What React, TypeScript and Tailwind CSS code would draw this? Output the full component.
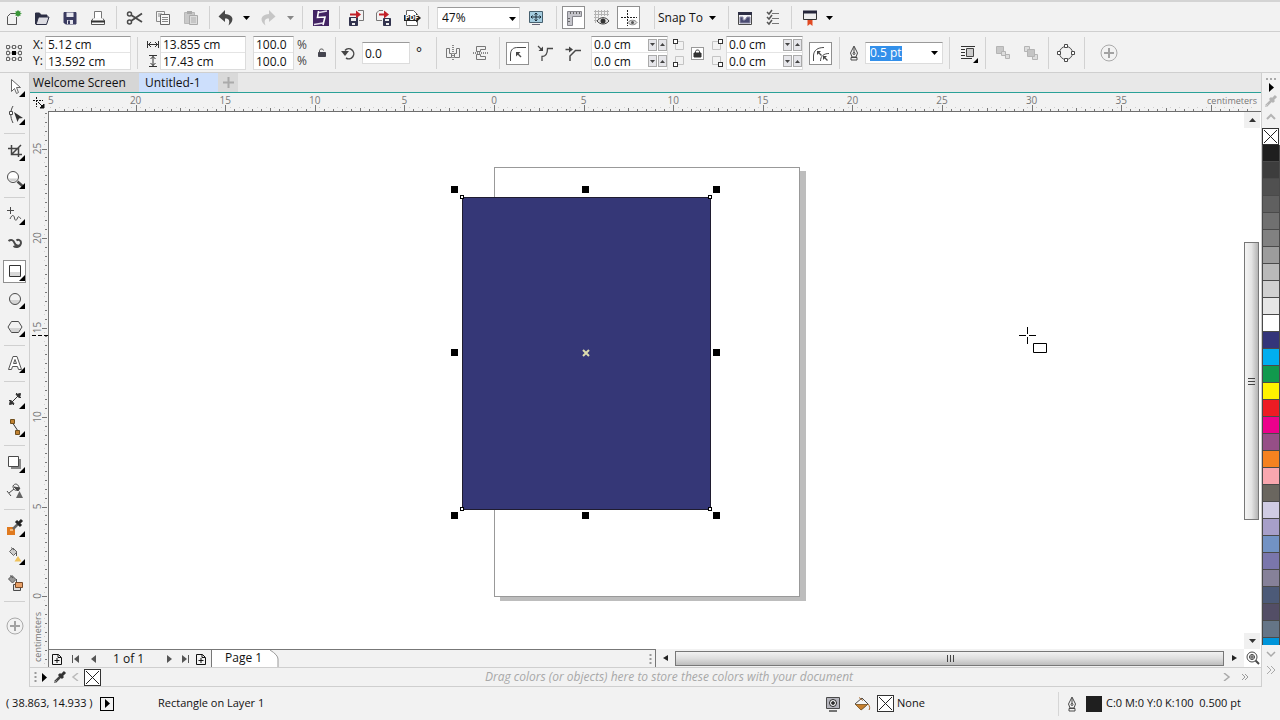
import React, { useState } from 'react';

interface IconProps {
  size?: number;
  className?: string;
  children: React.ReactNode;
}

const Icon = ({ size = 18, className = '', children }: IconProps) => (
  <svg
    width={size}
    height={size}
    viewBox={`0 0 ${size} ${size}`}
    fill="none"
    stroke="#4a4a4a"
    className={`shrink-0 ${className}`}
    aria-hidden="true"
  >
    {children}
  </svg>
);

interface ButtonProps {
  label: string;
  width?: string;
  active?: boolean;
  children: React.ReactNode;
}

const ToolButton = ({ label, width = 'w-7', active = false, children }: ButtonProps) => (
  <button
    type="button"
    aria-label={label}
    aria-pressed={active}
    className={
      active
        ? 'flex h-[23px] w-[23px] shrink-0 items-center justify-center border border-[#909090] bg-white'
        : `flex h-6 shrink-0 items-center justify-center ${width}`
    }
  >
    {children}
  </button>
);

const Sep = ({ className = 'mx-1' }: { className?: string }) => (
  <div className={`h-full w-px shrink-0 bg-[#d2d2d2] ${className}`} />
);

const Caret = ({ color = '#000' }: { color?: string }) => (
  <svg width="7" height="4" viewBox="0 0 7 4" className="shrink-0" aria-hidden="true">
    <path d="M0 0h7L3.500 4z" fill={color} />
  </svg>
);

const Triangle = ({ left = false, color = '#000', height = 8 }: { left?: boolean; color?: string; height?: number }) => (
  <svg width="5" height={height} viewBox="0 0 5 8" preserveAspectRatio="none" className="shrink-0" aria-hidden="true">
    <path d={left ? 'M5 0v8L0 4z' : 'M0 0v8l5-4z'} fill={color} />
  </svg>
);

const Dropper = ({ dark = false }: { dark?: boolean }) => (
  <Icon size={14}>
    <path d="M2 12l6-6" stroke={dark ? '#444' : '#b4b4b4'} strokeWidth="2.500" />
    <path d="M6 4l4 4M8 6l4-4" stroke={dark ? '#333' : '#b4b4b4'} strokeWidth="3" />
    <path d="M1 13l3-3" stroke={dark ? '#888' : '#ccc'} />
  </Icon>
);

const NoneSwatch = () => (
  <svg width="17" height="17" viewBox="0 0 17 17" className="shrink-0" aria-hidden="true">
    <rect x=".5" y=".5" width="16" height="16" fill="#fff" stroke="#333" />
    <path d="M2 2l13 13M15 2L2 15" stroke="#222" />
  </svg>
);

const PlusCircle = () => (
  <Icon>
    <circle cx="9" cy="9" r="8" stroke="#aaa" />
    <path d="M9 4v10M4 9h10" stroke="#a2a2a2" strokeWidth="2" />
  </Icon>
);

const PenNib = () => (
  <Icon size={16}>
    <path d="M8 1L4.500 8l1.500 4h4l1.500-4zM8 2v6M5 12.500h6V15H5z" />
    <circle cx="8" cy="8.500" r="1" />
  </Icon>
);

const StandardBar = () => {
  const [zoom, setZoom] = useState('47%');

  return (
    <div role="toolbar" aria-label="Standard" className="flex h-[30px] shrink-0 items-center border-b border-[#cfcfcf] pt-1 pb-0.5">
      <ToolButton label="New">
        <Icon>
          <path d="M2.500 15.500v-8l3-3H11M2.500 15.500h9V8" stroke="#555" />
          <circle cx="13" cy="4.500" r="2.500" fill="#2e8b2e" stroke="none" />
          <path d="M13 1v7M9.500 4.500h7M10.500 2l5 5M15.500 2l-5 5" stroke="#3f9a3c" strokeWidth=".8" />
        </Icon>
      </ToolButton>
      <ToolButton label="Open">
        <Icon>
          <path d="M2.500 15V4h4l1.500 2h6v2.500" fill="#2c2f44" stroke="#2c2f44" />
          <path d="M3 15.500L5.500 8H16l-2.500 7.500z" fill="#dcdce2" stroke="#2c2f44" />
        </Icon>
      </ToolButton>
      <ToolButton label="Save">
        <Icon>
          <path d="M3 3.500h12V15H4.500L3 13.500z" fill="#3a3b60" stroke="#3a3b60" />
          <path d="M5.500 3.500h7V8h-7z" fill="#e6e6ee" stroke="none" />
          <path d="M6 11h6v4H6z" fill="#e6e6ee" stroke="none" />
          <path d="M7 11.500h2V15H7z" fill="#3a3b60" stroke="none" />
        </Icon>
      </ToolButton>
      <ToolButton label="Print">
        <Icon>
          <path d="M5.500 9.500V2.500h7v7" fill="#fff" stroke="#777" />
          <path d="M4 9.500L2.500 12v3.500h13V12L14 9.500" fill="#fafafa" stroke="#555" />
          <path d="M2 12.500h14" stroke="#333" strokeWidth="2" />
        </Icon>
      </ToolButton>
      <Sep />
      <ToolButton label="Cut">
        <Icon>
          <circle cx="3.500" cy="5" r="2" strokeWidth="1.500" />
          <circle cx="3.500" cy="13" r="2" strokeWidth="1.500" />
          <path d="M5 6l11 7M5 12L16 4.500" strokeWidth="1.800" />
        </Icon>
      </ToolButton>
      <ToolButton label="Copy">
        <Icon>
          <path d="M2.500 2.500h8v10h-8z" fill="#f4f4f4" stroke="#888" />
          <path d="M6.500 5.500h9v10h-9z" fill="#f8f8f8" stroke="#666" />
          <path d="M8 8.500h6M8 10.500h6M8 12.500h6M4 5h4M4 7h2" stroke="#888" />
        </Icon>
      </ToolButton>
      <ToolButton label="Paste">
        <Icon>
          <path d="M2.500 3.500h10v11h-10z" fill="#c9c9c9" stroke="#b8b8b8" />
          <path d="M5 2h5v3H5z" fill="#aaa" stroke="none" />
          <path d="M7.500 6.500h8v9h-8z" fill="#ddd" stroke="#aaa" />
          <path d="M9 9h5M9 11h5M9 13h5" stroke="#b0b0b0" />
        </Icon>
      </ToolButton>
      <Sep />
      <ToolButton label="Undo" width="w-6">
        <Icon>
          <path d="M8 1L1.500 7.500 8 13v-3.500c4-.3 5.300 2.200 3.500 7C17.500 12 17 5.500 8 5z" fill="#484848" stroke="none" />
        </Icon>
      </ToolButton>
      <ToolButton label="Undo list" width="w-4"><Caret /></ToolButton>
      <ToolButton label="Redo">
        <Icon>
          <path d="M10 1l6.500 6.500L10 13V9.500c-4-.3-5.300 2.200-3.500 7C.5 12 1 5.500 10 5z" fill="#c6c6c6" stroke="none" />
        </Icon>
      </ToolButton>
      <ToolButton label="Redo list" width="w-4"><Caret color="#888" /></ToolButton>
      <Sep />
      <ToolButton label="Search content">
        <Icon size={16}>
          <path d="M0 0h16v16H0z" fill="#432463" stroke="none" />
          <path d="M5.500 1L4.500 7.500 12 7l-2 8" stroke="#fff" strokeWidth="1.600" />
          <path d="M6 2.500L14 1M1 14.500l9-1.500" stroke="#e6deee" strokeWidth="1.300" />
        </Icon>
      </ToolButton>
      <Sep />
      <ToolButton label="Import" width="w-6">
        <Icon>
          <path d="M11 1.500h5.500v10H12" stroke="#777" />
          <path d="M2.500 8.500h8v8h-8z" fill="#33344f" stroke="#33344f" />
          <path d="M4 9h5v3H4zM5 14h3v2H5z" fill="#eee" stroke="none" />
          <path d="M3 5.500h7" stroke="#c22028" strokeWidth="2" />
          <path d="M9 1.500v8l5-4z" fill="#c22028" stroke="none" />
        </Icon>
      </ToolButton>
      <ToolButton label="Export" width="w-8">
        <Icon>
          <path d="M7 11.500H1.500V4l2.500-2.500h4" stroke="#777" />
          <path d="M8.500 9.500h7v7h-7z" fill="#33344f" stroke="#33344f" />
          <path d="M10 10h4v2h-4zM11 14h3v2h-3z" fill="#eee" stroke="none" />
          <path d="M4 5.500h6" stroke="#c22028" strokeWidth="2" />
          <path d="M9 1.500v8l5-4z" fill="#c22028" stroke="none" />
        </Icon>
      </ToolButton>
      <ToolButton label="Publish to PDF" width="w-6">
        <span className="relative flex">
          <Icon>
            <path d="M3.500 1.500h7l4 4v11h-11z" fill="#fff" stroke="#666" />
            <path d="M1 6h12.500v6H1z" fill="#222" stroke="none" />
            <path d="M13 4.500v9L18 9z" fill="#222" stroke="none" />
          </Icon>
          <span className="absolute left-[2px] top-[5px] text-[7px] leading-[8px] font-bold text-white">PDF</span>
        </span>
      </ToolButton>
      <Sep />
      <div className="relative ml-1 shrink-0">
        <select
          aria-label="Zoom level"
          value={zoom}
          onChange={(e) => setZoom(e.target.value)}
          className="h-[22px] w-[83px] appearance-none border border-[#d8d8d8] border-t-[#9a9a9a] bg-white pl-1 text-xs"
        >
          <option>47%</option>
          <option>100%</option>
          <option>200%</option>
        </select>
        <span className="pointer-events-none absolute right-1 top-[10px]"><Caret /></span>
      </div>
      <ToolButton label="Full-screen preview" width="w-8">
        <Icon>
          <path d="M2.500 2.500h13v11h-13z" fill="#a5cde0" stroke="#46606f" />
          <path d="M5 15.500h8" stroke="#667" />
          <path d="M9 4v8M4 8h10M7.500 5.500L9 4l1.500 1.500M7.500 10.500L9 12l1.500-1.500M5.500 6.500L4 8l1.500 1.500M12.500 6.500L14 8l-1.500 1.500" stroke="#1c2d38" />
        </Icon>
      </ToolButton>
      <Sep className="ml-1 mr-[5px]" />
      <ToolButton label="Show rulers" active>
        <Icon>
          <path d="M2.500 2.500h14v5h-9v9h-5z" fill="#c4c4ca" stroke="#86868c" />
          <path d="M5.500 3v2M8.500 3v2M11.500 3v2M14.500 3v2M3 9.500h2M3 12.500h2" stroke="#666" />
        </Icon>
      </ToolButton>
      <ToolButton label="Show grid" width="w-8">
        <Icon>
          <path d="M3.500 1v13M6.500 1v13M9.500 1v6M12.500 1v6M15.500 1v6M2 2.500h15M2 5.500h15M2 8.500h5M2 11.500h3" stroke="#b4b4b4" />
          <path d="M5 12c3-4.500 9-4.500 12 0-3 4-9 4-12 0z" fill="#ddd" stroke="#444" />
          <circle cx="11" cy="12" r="2.500" fill="#333" stroke="none" />
        </Icon>
      </ToolButton>
      <ToolButton label="Show guidelines" active>
        <Icon>
          <path d="M7.500 1v16M1 8.500h16" stroke="#222" strokeDasharray="2 1" />
          <path d="M8 13.500c2-3 7-3 9 0-2 3-7 3-9 0z" fill="#ddd" stroke="#888" />
          <circle cx="12.500" cy="13.500" r="1.500" fill="#555" stroke="none" />
        </Icon>
      </ToolButton>
      <Sep className="ml-3.5 mr-[3px]" />
      <button type="button" className="flex h-6 shrink-0 items-center gap-1.5 text-xs">
        Snap To <Caret />
      </button>
      <Sep className="ml-3 mr-0.5" />
      <ToolButton label="Options">
        <Icon>
          <path d="M2.500 3.500h13v12h-13z" fill="#f4f4f8" />
          <path d="M2 4.500h14" stroke="#2d2f45" strokeWidth="3" />
          <path d="M4 8h3v3h2l2-3h3v6H4z" fill="#4a4b72" stroke="#8c8ca6" />
        </Icon>
      </ToolButton>
      <ToolButton label="Check list">
        <Icon>
          <path d="M8 4.500h7M8 9.500h7M8 14.500h7" stroke="#777" />
          <path d="M3 3l2 2 3-4M3 8l2 2 3-4M3 13l2 2 3-4" stroke="#555" strokeWidth="1.500" />
        </Icon>
      </ToolButton>
      <Sep />
      <ToolButton label="Application launcher">
        <Icon>
          <path d="M2.500 2.500h13v8h-13z" fill="#eee" stroke="#333" />
          <path d="M2 3h14" stroke="#25263a" strokeWidth="3" />
          <path d="M6.500 11h5v6L9 15l-2.500 2z" fill="#e14a22" stroke="none" />
        </Icon>
      </ToolButton>
      <ToolButton label="Launcher list" width="w-3"><Caret /></ToolButton>
    </div>
  );
};

const boxClass = 'flex shrink-0 flex-col divide-y divide-[#e4e4e4] border border-[#dcdcdc] border-t-[#9a9a9a] bg-white';

interface FieldPairProps {
  names: [string, string];
  values: [string, string];
  width: string;
  spin?: boolean;
}

const SpinArrows = ({ name }: { name: string }) => (
  <span className="flex items-center gap-px">
    <button type="button" aria-label={`Decrease ${name}`} className="flex h-3 w-[9px] items-center justify-center border border-[#aaa] bg-[#e6e6ea]">
      <svg width="5" height="3" viewBox="0 0 5 3"><path d="M0 0h5L2.500 3z" fill="#444" /></svg>
    </button>
    <button type="button" aria-label={`Increase ${name}`} className="flex h-3 w-[9px] items-center justify-center border border-[#aaa] bg-[#e6e6ea]">
      <svg width="5" height="3" viewBox="0 0 5 3"><path d="M0 3h5L2.500 0z" fill="#444" /></svg>
    </button>
  </span>
);

const FieldPair = ({ names, values, width, spin = false }: FieldPairProps) => (
  <div className={`${boxClass} ${width}`}>
    {names.map((name, i) => (
      <div key={name} className="flex h-4 items-center">
        <input aria-label={name} defaultValue={values[i]} className="h-full w-full min-w-0 bg-white pl-0.5 text-xs leading-4 outline-none" />
        {spin && <SpinArrows name={name} />}
      </div>
    ))}
  </div>
);

const CornerIcons = ({ flip = false }: { flip?: boolean }) => (
  <svg width="14" height="30" viewBox="0 0 14 30" fill="none" className="shrink-0" aria-hidden="true">
    <path d="M3.500 3.500h8v8h-8zM3.500 18.500h8v8h-8z" stroke="#c4c4c4" />
    <rect x={flip ? 9.5 : 1.5} y="1.500" width="4" height="4" fill="#fff" stroke="#333" />
    <rect x={flip ? 9.5 : 1.5} y="24.500" width="4" height="4" fill="#fff" stroke="#333" />
  </svg>
);

const FlyoutMark = () => (
  <svg width="6" height="6" viewBox="0 0 6 6" className="pointer-events-none absolute bottom-1 right-1" aria-hidden="true">
    <path d="M6 0v6H0z" fill="#000" />
  </svg>
);

const PropertyBar = () => (
  <div role="toolbar" aria-label="Property bar" className="flex h-[41px] shrink-0 items-center border-b border-[#cfcfcf] pt-[5px] pb-[3px]">
    <ToolButton label="Object origin">
      <Icon>
        <path d="M4 3h10M4 9h10M4 15h10M3 4v10M15 4v10" stroke="#999" />
        <path d="M1.500 1.500h3v3h-3zM7.500 1.500h3v3h-3zM13.500 1.500h3v3h-3zM1.500 7.500h3v3h-3zM13.500 7.500h3v3h-3zM1.500 13.500h3v3h-3zM7.500 13.500h3v3h-3zM13.500 13.500h3v3h-3z" fill="#f2f2f2" stroke="#666" />
        <path d="M7 7h4v4H7z" fill="#000" stroke="none" />
      </Icon>
    </ToolButton>
    <div className="ml-[5px] flex w-3 shrink-0 flex-col text-xs leading-4">
      <span>X:</span>
      <span>Y:</span>
    </div>
    <FieldPair names={['X position', 'Y position']} values={['5.12 cm', '13.592 cm']} width="w-[86px]" />
    <Sep className="ml-1.5 mr-2" />
    <svg width="14" height="32" viewBox="0 0 14 32" fill="none" stroke="#333" className="shrink-0" aria-hidden="true">
      <path d="M1.500 4v7M12.500 4v7M2 7.500h10M5 5L2.500 7.500 5 10M9 5l2.500 2.500L9 10M3 18.500h8M3 29.500h8M7 19v10M4.500 22L7 19.500 9.500 22M4.500 26L7 28.500 9.500 26" />
    </svg>
    <FieldPair names={['Width', 'Height']} values={['13.855 cm', '17.43 cm']} width="w-[86px]" />
    <div className="w-[7px] shrink-0" />
    <FieldPair names={['Horizontal scale', 'Vertical scale']} values={['100.0', '100.0']} width="w-[41px]" />
    <div className="ml-[3px] flex w-4 shrink-0 flex-col text-xs leading-4 text-[#444]">
      <span>%</span>
      <span>%</span>
    </div>
    <ToolButton label="Lock ratio" width="w-[18px]">
      <Icon size={10}>
        <path d="M1.500 4.500h7v4h-7z" fill="#45454f" stroke="#45454f" />
        <path d="M2.500 4V2.500c0-2 4-2 4 0" />
      </Icon>
    </ToolButton>
    <Sep className="ml-1 mr-1" />
    <Icon>
      <path d="M5 6.500a5 5 0 1 1 1 7.500" strokeWidth="1.500" />
      <path d="M1 7h8L5 12z" fill="#444" stroke="none" />
    </Icon>
    <input aria-label="Angle of rotation" defaultValue="0.0" className="ml-1 h-[22px] w-12 shrink-0 border border-[#dcdcdc] border-t-[#9a9a9a] bg-white px-0.5 text-xs" />
    <span className="ml-1.5 w-3 shrink-0 text-sm">°</span>
    <Sep className="ml-2 mr-0.5" />
    <ToolButton label="Mirror horizontally">
      <Icon>
        <path d="M2.500 4.500v9h5v-4h-2v-5zM15.500 4.500v9h-5v-4h2v-5z" stroke="#777" />
        <path d="M9 1v16" stroke="#222" strokeDasharray="1 1" />
      </Icon>
    </ToolButton>
    <ToolButton label="Mirror vertically">
      <Icon>
        <path d="M4.500 2.500h9v3h-5v2h-4zM4.500 15.500h9v-3h-5v-2h-4z" stroke="#777" />
        <path d="M1 9h16" stroke="#222" strokeDasharray="1 1" />
      </Icon>
    </ToolButton>
    <Sep className="ml-1 mr-1.5" />
    <ToolButton label="Round corner" active>
      <Icon>
        <path d="M1.500 17V11C1.500 5 4.500 3.500 9 3.500h8" />
        <path d="M7 8h4.500L7 12.500z" fill="#444" stroke="none" />
        <path d="M8 9l4 4" strokeWidth="1.500" />
      </Icon>
    </ToolButton>
    <ToolButton label="Scalloped corner" width="w-8">
      <Icon>
        <path d="M6 17v-4.500c4.500 0 5.500-3 5.500-8H17" strokeWidth="1.300" />
        <path d="M7 2.500V7H2.500z" fill="#444" stroke="none" />
        <path d="M2 2l3 3" strokeWidth="1.300" />
      </Icon>
    </ToolButton>
    <ToolButton label="Chamfered corner" width="w-6">
      <Icon>
        <path d="M6 17v-5l5.500-5.500H17" strokeWidth="1.500" />
        <path d="M1.500 5.500H5" strokeWidth="1.500" />
        <path d="M5 2.500L9 5.500l-4 3z" fill="#444" stroke="none" />
      </Icon>
    </ToolButton>
    <div className="w-1.5 shrink-0" />
    <FieldPair names={['Top left radius', 'Bottom left radius']} values={['0.0 cm', '0.0 cm']} width="w-[77px]" spin />
    <div className="ml-1 flex shrink-0 items-center">
      <CornerIcons />
      <button type="button" aria-label="Edit corners together" className="mx-[5px] flex h-[13px] w-[13px] items-center justify-center border border-[#999] bg-white">
        <Icon size={9}>
          <path d="M1 4h7v4H1z" fill="#333" stroke="#333" />
          <path d="M2.500 4V2.500c0-2 4-2 4 0V4" stroke="#333" />
        </Icon>
      </button>
      <CornerIcons flip />
    </div>
    <div className="w-[3px] shrink-0" />
    <FieldPair names={['Top right radius', 'Bottom right radius']} values={['0.0 cm', '0.0 cm']} width="w-[77px]" spin />
    <div className="w-1.5 shrink-0" />
    <ToolButton label="Relative corner scaling" active>
      <Icon>
        <path d="M1.500 17V12C1.500 6 6 3.500 12 3.500M8.500 17C8.500 12 12 9.500 17 9.500" />
        <path d="M5 7h4l-4 4zM11 12h4l-4 4z" fill="#444" stroke="none" />
        <path d="M6 8l3.500 3.500M12 13l3.500 3.500" strokeWidth="1.300" />
      </Icon>
    </ToolButton>
    <Sep className="ml-[7px] mr-1.5" />
    <PenNib />
    <div className="ml-[3px] flex h-[22px] w-[78px] shrink-0 items-center border border-[#dcdcdc] border-t-[#9a9a9a] bg-white pl-1">
      <input aria-label="Outline width" defaultValue="0.5 pt" className="h-[15px] w-8 bg-[#3390ea] text-xs text-white outline-none" />
      <button type="button" aria-label="Outline width list" className="ml-auto mr-1"><Caret /></button>
    </div>
    <Sep className="ml-1.5 mr-1" />
    <span className="relative flex shrink-0">
      <ToolButton label="Wrap text">
        <Icon>
          <path d="M2 2.500h14M2 5.500h4M2 8.500h4M2 11.500h4M2 14.500h11" stroke="#333" />
          <path d="M7.500 4.500h7v8h-7z" fill="#ccc" stroke="#444" />
        </Icon>
      </ToolButton>
      <svg width="5" height="5" viewBox="0 0 6 6" className="pointer-events-none absolute bottom-0.5 right-1" aria-hidden="true">
        <path d="M6 0v6H0z" fill="#000" />
      </svg>
    </span>
    <Sep className="mx-[3px]" />
    <ToolButton label="To front of layer">
      <Icon>
        <path d="M2.500 2.500h7v7h-7z" fill="#c8c8c8" stroke="#b4b4b4" />
        <path d="M7.500 7.500h4v4h-4zM11.500 10.500h4v4h-4z" fill="#ddd" stroke="#b4b4b4" />
      </Icon>
    </ToolButton>
    <ToolButton label="To back of layer">
      <Icon>
        <path d="M2.500 2.500h5v5h-5zM10.500 10.500h5v5h-5z" fill="#ddd" stroke="#b4b4b4" />
        <path d="M5.500 5.500h7v7h-7z" fill="#c4c4c4" stroke="#b4b4b4" />
      </Icon>
    </ToolButton>
    <Sep className="mx-[3px]" />
    <ToolButton label="Convert to curves">
      <Icon>
        <circle cx="9" cy="9" r="6.500" />
        <path d="M7.500.5h3v3h-3zM7.500 14.500h3v3h-3zM.5 7.500h3v3h-3zM14.500 7.500h3v3h-3z" fill="#fff" />
      </Icon>
    </ToolButton>
    <Sep className="ml-1 mr-2.5" />
    <ToolButton label="Quick customize"><PlusCircle /></ToolButton>
  </div>
);

interface Tool {
  name: string;
  flyout?: boolean;
  active?: boolean;
  icon: React.ReactNode;
}

const toolGroups: Tool[][] = [
  [
    { name: 'Pick', flyout: true, icon: <path d="M5.500 1.500v12l3-3 2 5 2-1-2-5h4z" fill="#fff" stroke="#666" /> },
    {
      name: 'Shape',
      flyout: true,
      icon: (
        <>
          <path d="M7 0C4 5 4 11 7 17" />
          <path d="M3.500 5.500h3v3h-3z" fill="#fff" />
          <path d="M8 6l9 6-4 .5L11.500 16z" fill="#333" stroke="none" />
        </>
      ),
    },
  ],
  [
    { name: 'Crop', flyout: true, icon: <path d="M5.500 3v9.500H16M2 6.500h10.500V15M6 12l9-9" stroke="#444" strokeWidth="1.500" /> },
    {
      name: 'Zoom',
      flyout: true,
      icon: (
        <>
          <circle cx="7" cy="7" r="5.500" fill="#fff" />
          <path d="M2.500 8.500h9a5 5 0 0 1-9 0z" fill="#d0d0d0" stroke="none" />
          <path d="M11.500 11.500l5 4.500" strokeWidth="2.500" />
        </>
      ),
    },
  ],
  [
    { name: 'Freehand', flyout: true, icon: <path d="M4.500 1v7M1 4.500h7M4 13c2-5 4-4 4.500-1s2 3 3 0 2.500 0 3.500 1" /> },
    { name: 'Artistic media', icon: <path d="M2.500 7C5 5 7.500 6 8.500 9s6 4 6.500 0c.3-3-3-4-4.500-2.500M15 9c-.5 4-5 5-7.500 3" strokeWidth="2" /> },
    {
      name: 'Rectangle',
      flyout: true,
      active: true,
      icon: (
        <>
          <path d="M3.500 3.500h11v11h-11z" fill="#fff" stroke="#333" />
          <path d="M4 10h10v4H4z" fill="#d8d8d8" stroke="none" />
        </>
      ),
    },
    {
      name: 'Ellipse',
      flyout: true,
      icon: (
        <>
          <path d="M4 10h10a5 5 0 0 1-10 0z" fill="#d4d4d4" stroke="none" />
          <circle cx="9" cy="9" r="5.500" />
        </>
      ),
    },
    {
      name: 'Polygon',
      flyout: true,
      icon: (
        <>
          <path d="M3.500 10h11L12 14H6z" fill="#d4d4d4" stroke="none" />
          <path d="M5.500 3.500h7L16 9l-3.500 5.500h-7L2 9z" />
        </>
      ),
    },
  ],
  [{ name: 'Text', flyout: true, icon: <path d="M2.500 15.500L7 2.500h4l4.500 13h-3l-1-3h-5l-1 3zM7.500 9.500h3L9 5.500z" fill="#fff" stroke="#555" /> }],
  [
    { name: 'Dimension', flyout: true, icon: <path d="M5 13l8-8M3 10l5 5M10 3l5 5M3.500 14.500L4.500 10 8 13.500zM14.500 3.500L10 4.500 13.500 8z" fill="#333" stroke="#333" /> },
    {
      name: 'Connector',
      flyout: true,
      icon: (
        <>
          <path d="M6 4l6 9" stroke="#333" />
          <path d="M4.500 1.500h4v4h-4zM9.500 12.500h4v4h-4z" fill="#c18232" stroke="#70501f" />
        </>
      ),
    },
  ],
  [
    {
      name: 'Drop shadow',
      flyout: true,
      icon: (
        <>
          <path d="M5 5h10v10H5z" fill="#888" stroke="none" />
          <path d="M2.500 2.500h10v10h-10z" fill="#fff" />
        </>
      ),
    },
    {
      name: 'Transparency',
      icon: (
        <>
          <path d="M7 4c3-5 8 1 5 4-2 1-5 0-5-4zM8 7l-5 4M1 9l4 5" />
          <path d="M8 5l6 1-2 3z" fill="#444" />
          <path d="M13.500 9L17 16h-7z" fill="#666" stroke="none" />
        </>
      ),
    },
  ],
  [
    {
      name: 'Color eyedropper',
      flyout: true,
      icon: (
        <>
          <path d="M1 9h8v8H1z" fill="#e07a1f" stroke="none" />
          <path d="M4 11h3v2H4z" fill="#f6b877" stroke="none" />
          <path d="M7 11l6-6" stroke="#666" strokeWidth="2.500" />
          <path d="M10 3l5 5M12 6l4-4" stroke="#252525" strokeWidth="3" />
        </>
      ),
    },
    {
      name: 'Interactive fill',
      flyout: true,
      icon: (
        <>
          <path d="M3.500 5.500L7 2l4 4-3.500 3.500zM5 1.500L8 4" fill="#ccc" stroke="#666" />
          <path d="M10.500 7v3" stroke="#555" />
          <path d="M12 10l3.500 5.500h-7z" fill="#efc25b" stroke="none" />
        </>
      ),
    },
    {
      name: 'Smart fill',
      icon: (
        <>
          <path d="M2.500 5L6 1.500l4 4L6.500 9zM4 1.500L7 4" fill="#999" stroke="#555" />
          <path d="M10.500 5v3" stroke="#555" />
          <path d="M7.500 10.500h7v6h-7z" fill="#ddd" />
          <path d="M9.500 8.500h7v5h-7z" fill="#e9a066" stroke="#774a2a" />
        </>
      ),
    },
  ],
];

const Toolbox = () => (
  <div role="toolbar" aria-label="Toolbox" className="flex w-[30px] shrink-0 flex-col border-r border-[#cfcfcf]">
    {toolGroups.map((group) => (
      <div key={group[0].name} className="flex flex-col">
        {group.map((tool) => (
          <div key={tool.name} className="relative flex h-7 items-center justify-center">
            <ToolButton label={tool.name} active={tool.active}>
              <Icon>{tool.icon}</Icon>
            </ToolButton>
            {tool.flyout && <FlyoutMark />}
          </div>
        ))}
        <div className="flex h-2 items-center px-1">
          <div className="h-px w-full bg-[#d0d0d0]" />
        </div>
      </div>
    ))}
    <div className="flex h-[42px] items-center justify-center">
      <ToolButton label="Customize toolbox"><PlusCircle /></ToolButton>
    </div>
  </div>
);

// pixels per five centimeters
const H_STEP = 89.6;
const V_STEP = 89.5;
const horizontalLabels = [-20, -15, -10, -5, 0, 5, 10, 15, 20, 25, 30, 35];
const verticalLabels = [25, 20, 15, 10, 5, 0];

const HorizontalRuler = () => {
  const zero = 446;
  const ticks = Array.from({ length: 270 }, (_, i) => i - 100);

  return (
    <svg height="19" className="w-full min-w-0 flex-1 border-b border-[#6e6e6e]" aria-label="Horizontal ruler">
      {ticks.map((i) => {
        const x = Math.round(zero + (i * H_STEP) / 20);
        const height = i % 20 === 0 ? 6 : i % 10 === 0 ? 3 : i % 2 === 0 ? 2 : 1;
        return <rect key={i} x={x} y={i % 2 === 0 ? 18 - height : 14} width="1" height={height} fill={i % 2 === 0 ? '#777' : '#cfcfcf'} />;
      })}
      <text x="0" y="11" fontSize="10" fill="#777">5</text>
      {horizontalLabels.map((cm) => (
        <text key={cm} x={zero + (cm / 5) * H_STEP} y="11" textAnchor="middle" fontSize="10" fill="#777">
          {Math.abs(cm)}
        </text>
      ))}
    </svg>
  );
};

const VerticalRuler = () => {
  const zero = 484;
  const ticks = Array.from({ length: 132 }, (_, i) => i - 18);

  return (
    <svg width="18" className="h-full shrink-0" aria-label="Vertical ruler">
      {ticks.map((i) => {
        const y = Math.round(zero - (i * V_STEP) / 20);
        const length = i % 20 === 0 ? 5 : i % 2 === 0 ? 2 : 1;
        return <rect key={i} x={i % 2 === 0 ? 17 - length : 14} y={y} width={length} height="1" fill={i % 2 === 0 ? '#777' : '#cfcfcf'} />;
      })}
      {verticalLabels.map((cm) => {
        const y = zero - (cm / 5) * V_STEP;
        return (
          <text key={cm} x="11" y={y} transform={`rotate(-90 11 ${y})`} textAnchor="middle" fontSize="10" fill="#777">
            {cm}
          </text>
        );
      })}
      <text x="11" y="525" transform="rotate(-90 11 525)" textAnchor="middle" fontSize="9" fill="#777">
        centimeters
      </text>
      <path d="M2 223.500h16" stroke="#000" strokeDasharray="4 2" />
    </svg>
  );
};

const handles = [
  'left-[402px] top-[74px]',
  'left-[533px] top-[74px]',
  'left-[664px] top-[74px]',
  'left-[402px] top-[237px]',
  'left-[664px] top-[237px]',
  'left-[402px] top-[400px]',
  'left-[533px] top-[400px]',
  'left-[664px] top-[400px]',
];

const nodes = ['left-[411px] top-[83px]', 'left-[659px] top-[83px]', 'left-[411px] top-[395px]', 'left-[659px] top-[395px]'];

const Canvas = () => (
  <main className="relative min-w-0 flex-1 overflow-hidden bg-white">
    <div className="absolute left-[451px] top-[59px] h-[430px] w-[306px] bg-[#bdbdbd]" />
    <div className="absolute left-[445px] top-[55px] h-[430px] w-[306px] border border-[#999] bg-white" />
    <div className="absolute left-[413px] top-[85px] h-[313px] w-[249px] border border-[#1f1c30] bg-[#353777]" />
    {nodes.map((position) => (
      <div key={position} className={`absolute h-1 w-1 border border-black bg-white ${position}`} />
    ))}
    {handles.map((position) => (
      <div key={position} className={`absolute h-[7px] w-[7px] bg-black ${position}`} />
    ))}
    <svg width="8" height="8" viewBox="0 0 8 8" className="absolute left-[533px] top-[237px]" aria-hidden="true">
      <path d="M1 1l6 6M7 1L1 7" stroke="#dcdcae" strokeWidth="2" />
    </svg>
    <svg width="30" height="28" viewBox="0 0 30 28" fill="none" stroke="#000" className="absolute left-[970px] top-[215px]" aria-hidden="true">
      <path d="M8.500 0v7M8.500 10v7M0 8.500h7M10 8.500h7M14.500 16.500h13v9h-13z" />
    </svg>
  </main>
);

const VerticalScrollbar = () => (
  <div className="flex w-[17px] shrink-0 flex-col bg-white pr-px">
    <button type="button" aria-label="Scroll up" className="flex h-4 shrink-0 items-center justify-center bg-[#f0f0f0]">
      <svg width="7" height="4" viewBox="0 0 7 4"><path d="M0 4h7L3.500 0z" fill="#333" /></svg>
    </button>
    <div className="grow-[114] basis-0" />
    <div className="mr-px flex grow-[277] basis-0 items-center justify-center border border-[#777] bg-gradient-to-r from-[#f4f4f4] via-[#e4e4e4] to-[#b4b4b4]">
      <svg width="7" height="8" viewBox="0 0 7 8"><path d="M0 1.500h7M0 4.500h7M0 7.500h7" stroke="#444" /></svg>
    </div>
    <div className="grow-[113] basis-0" />
    <button type="button" aria-label="Scroll down" className="flex h-4 shrink-0 items-center justify-center bg-[#f0f0f0]"><Caret color="#333" /></button>
  </div>
);

const AddPage = ({ label }: { label: string }) => (
  <ToolButton label={label} width="w-4">
    <Icon size={12}>
      <path d="M1.500 1.500h6l3 3v7h-9zM7 1.500v3h3M3.500 7.500h5M6 5v5" stroke="#111" />
    </Icon>
  </ToolButton>
);

const PageBar = () => (
  <div className="flex h-[18px] shrink-0 items-center">
    <div className="flex h-full flex-1 items-center overflow-hidden border-t border-[#777]">
      <AddPage label="Add page before" />
      <button type="button" aria-label="First page" className="ml-0.5 flex w-4 items-center justify-center gap-px">
        <span className="h-2 w-px bg-[#555]" /><Triangle left color="#555" />
      </button>
      <button type="button" aria-label="Previous page" className="ml-0.5 flex w-4 justify-center"><Triangle left color="#555" /></button>
      <span className="ml-3 w-12 text-xs leading-4">1 of 1</span>
      <button type="button" aria-label="Next page" className="flex w-4 justify-center"><Triangle color="#555" /></button>
      <button type="button" aria-label="Last page" className="flex w-4 items-center justify-center gap-px">
        <Triangle color="#555" /><span className="h-2 w-px bg-[#555]" />
      </button>
      <AddPage label="Add page after" />
      <div role="tab" aria-selected="true" className="ml-0.5 flex h-full items-center border-l border-[#777] bg-white pb-0.5 pl-[13px] text-xs leading-4">
        <span>Page 1</span>
      </div>
      <svg width="17" height="17" viewBox="0 0 17 17" aria-hidden="true">
        <path d="M0 0h8q8 5 8 9v8H0z" fill="#fff" />
        <path d="M8 0q8 5 8 9v8" fill="none" stroke="#999" />
      </svg>
      <svg width="3" height="12" viewBox="0 0 3 12" className="ml-auto mr-[3px]"><path d="M1.500 1v11" stroke="#999" strokeWidth="2" strokeDasharray="2 2" /></svg>
    </div>
    <div className="flex h-full w-[589px] shrink-0 items-center border-l border-[#777]">
      <button type="button" aria-label="Scroll left" className="flex w-[19px] justify-center"><Triangle left color="#222" height={6} /></button>
      <div className="flex h-[15px] flex-1 items-center justify-center border border-[#777] bg-gradient-to-b from-[#f2f2f2] via-[#dedede] to-[#bdbdbd]">
        <svg width="8" height="7" viewBox="0 0 8 7"><path d="M1.500 0v7M4.500 0v7M7.500 0v7" stroke="#444" /></svg>
      </div>
      <button type="button" aria-label="Scroll right" className="flex w-5 justify-center"><Triangle color="#222" height={6} /></button>
    </div>
    <button type="button" aria-label="Navigator" className="flex h-full w-[17px] shrink-0 items-center justify-center bg-white">
      <Icon size={14}>
        <circle cx="6" cy="6" r="5" />
        <circle cx="6" cy="6" r="2.500" />
        <path d="M6 3v6M3 6h6" />
        <path d="M9.500 9.500l3.500 3.500" strokeWidth="2" />
      </Icon>
    </button>
  </div>
);

const DocumentPalette = () => (
  <div className="flex h-[20px] shrink-0 items-center border-y border-[#cfcfcf] pl-1">
    <svg width="3" height="12" viewBox="0 0 3 12" className="shrink-0"><path d="M1.500 1v11" stroke="#999" strokeWidth="2" strokeDasharray="2 2" /></svg>
    <button type="button" aria-label="Palette menu" className="ml-[5px]"><Triangle height={9} /></button>
    <button type="button" aria-label="Pick palette color" className="ml-1.5"><Dropper dark /></button>
    <button type="button" aria-label="Scroll palette left" className="ml-1">
      <Icon size={8}><path d="M7 0L2 4l5 4" stroke="#bbb" strokeWidth="1.500" /></Icon>
    </button>
    <button type="button" aria-label="No color" className="ml-[5px]"><NoneSwatch /></button>
    <p className="flex-1 pl-3.5 text-center text-xs italic text-[#a8a8a8]">
      Drag colors (or objects) here to store these colors with your document
    </p>
    <button type="button" aria-label="Scroll palette right" className="mr-2.5">
      <Icon size={8}><path d="M1 0l5 4-5 4" stroke="#aaa" strokeWidth="1.500" /></Icon>
    </button>
    <button type="button" aria-label="Expand palette" className="mr-3">
      <Icon size={8}><path d="M1 1l3 3-3 3M4 1l3 3-3 3" stroke="#999" /></Icon>
    </button>
  </div>
);

const swatches = [
  '#1f1f1f', '#3d3d3d', '#505050', '#606060', '#707070', '#818181', '#9c9c9c', '#b9b9b9', '#d0d0d0', '#e6e6e6', '#ffffff',
  '#34357a', '#00aeef', '#11994d', '#fff200', '#ed1c24', '#ec008c', '#964f87', '#f58220', '#f9a7af', '#6a665f',
  '#d0cce4', '#a79fc9', '#7292c4', '#7a76ac', '#868199', '#4c5a78', '#534e66', '#657587', '#0095da',
];

const ColorPalette = () => (
  <aside aria-label="Color palette" className="flex w-[19px] shrink-0 flex-col border-l border-[#cfcfcf]">
    <div className="flex h-[54px] shrink-0 flex-col items-center">
      <div className="mt-[5px] h-0 w-2.5 border-t-2 border-dotted border-[#aaa]" />
      <button type="button" aria-label="Palette options" className="mt-[3px]"><Triangle height={9} /></button>
      <button type="button" aria-label="Sample color" className="mt-0.5"><Dropper /></button>
      <button type="button" aria-label="Scroll colors up" className="mt-1">
        <Icon size={10}><path d="M1 7l4-4 4 4" stroke="#b4b4b4" strokeWidth="2" /></Icon>
      </button>
    </div>
    <div className="flex min-h-0 flex-1 flex-col overflow-hidden">
      <button type="button" aria-label="No color" className="h-[18px] shrink-0 pt-px"><NoneSwatch /></button>
      {swatches.map((color) => (
        <button
          key={color}
          type="button"
          aria-label={color}
          className="h-[17px] w-full shrink-0 border border-t-0 border-[#4a4a4a]"
          style={{ backgroundColor: color }}
        />
      ))}
    </div>
    <div className="flex h-[42px] shrink-0 flex-col items-center gap-1.5 pt-1">
      <button type="button" aria-label="Scroll colors down">
        <Icon size={10}><path d="M1 3l4 4 4-4" stroke="#aaa" strokeWidth="1.500" /></Icon>
      </button>
      <button type="button" aria-label="Expand colors">
        <Icon size={10}><path d="M1 1l4 4-4 4M5 1l4 4-4 4" stroke="#aaa" /></Icon>
      </button>
    </div>
  </aside>
);

const StatusBar = () => (
  <footer className="flex h-[33px] shrink-0 items-center whitespace-nowrap text-[11px]">
    <span className="w-[100px] pl-1.5">( 38.863, 14.933 )</span>
    <button type="button" aria-label="Coordinates options" className="flex h-3.5 w-3.5 items-center justify-center border border-black"><Triangle height={9} /></button>
    <span className="ml-11">Rectangle on Layer 1</span>
    <div className="ml-auto flex w-[234px] items-center">
      <Icon>
        <path d="M2.500 2.500h13v11h-13z" fill="#b4b4bc" />
        <circle cx="9" cy="8" r="3.500" fill="#fff" stroke="#222" />
        <circle cx="9" cy="8" r="1.500" fill="#222" />
        <path d="M5 16h8" strokeWidth="1.500" />
      </Icon>
      <Icon className="ml-[11px]">
        <path d="M2 9l7-6 6 6-7 6z" fill="#f6f6f6" />
        <path d="M2.500 9.500h12l-6.500 5.500z" fill="#c8802e" stroke="#8a6534" />
        <path d="M6 2.500l4 3M15 9c2 2 2 5 1 6" stroke="#a7682c" />
      </Icon>
      <span className="ml-1.5 mr-[3px]"><NoneSwatch /></span>
      <span>None</span>
    </div>
    <div className="flex h-full w-[222px] items-center">
      <div className="h-6 w-px bg-[#d6d6d6]" />
      <span className="ml-[5px]"><PenNib /></span>
      <span className="ml-1.5 mr-1 h-4 w-4 shrink-0 bg-[#1f1f1f]" />
      <span className="whitespace-pre">C:0 M:0 Y:0 K:100  0.500 pt</span>
    </div>
  </footer>
);

export default function App() {
  return (
    <div className="flex h-screen flex-col overflow-hidden border-t-2 border-[#d4d4d4] bg-[#f2f2f2] font-['Open_Sans','Noto_Sans',sans-serif] text-xs text-[#111]">
      <StandardBar />
      <PropertyBar />
      <div className="flex min-h-0 flex-1">
        <Toolbox />
        <div className="flex min-w-0 flex-1 flex-col">
          <div role="tablist" className="flex h-[20px] shrink-0 items-stretch border-b border-[#2aa198] bg-[#e8e8e8]">
            <button type="button" role="tab" aria-selected="false" className="w-[109px] bg-[#d6d6d6] pl-[3px] text-left">Welcome Screen</button>
            <button type="button" role="tab" aria-selected="true" className="w-[79px] bg-[#cddffc] pl-1.5 text-left">Untitled-1</button>
            <button type="button" aria-label="New document" className="flex w-5 items-center justify-center bg-[#d9d9d9]">
              <Icon size={11}><path d="M5.500 0v11M0 5.500h11" stroke="#aaa" strokeWidth="2" /></Icon>
            </button>
          </div>
          <div className="relative flex h-[19px] shrink-0">
            <div className="flex w-[18px] shrink-0 items-center justify-center">
              <Icon size={12}>
                <path d="M0 3.500h10M3.500 0v10" stroke="#111" strokeDasharray="2 1" />
                <path d="M5 5l5 5M11 7v4H7z" fill="#111" stroke="#111" />
              </Icon>
            </div>
            <HorizontalRuler />
            <span className="absolute right-1 top-0.5 text-[9px] leading-3 text-[#777]">centimeters</span>
          </div>
          <div className="flex min-h-0 flex-1">
            <VerticalRuler />
            <div className="flex min-w-0 flex-1 flex-col border-l border-[#777]">
              <div className="flex min-h-0 flex-1">
                <Canvas />
                <VerticalScrollbar />
              </div>
              <PageBar />
            </div>
          </div>
          <DocumentPalette />
        </div>
        <ColorPalette />
      </div>
      <StatusBar />
    </div>
  );
}
